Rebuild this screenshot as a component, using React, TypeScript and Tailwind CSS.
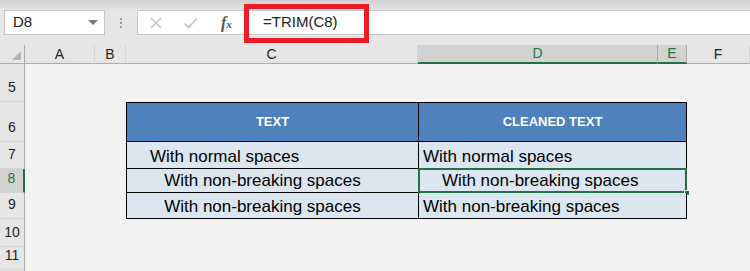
import React from "react";

const cols = [
  { key: "A", w: 70 },
  { key: "B", w: 31 },
  { key: "C", w: 292 },
  { key: "D", w: 240, active: true },
  { key: "E", w: 29, active: true },
  { key: "F", w: 63 },
];

const rows = [
  { n: 5, h: 38 },
  { n: 6, h: 40 },
  { n: 7, h: 27 },
  { n: 8, h: 24, active: true },
  { n: 9, h: 26 },
  { n: 10, h: 28 },
  { n: 11, h: 23 },
  { n: 0, h: 20 },
];

const data: Record<number, [string, string]> = {
  7: ["With normal spaces", "With normal spaces"],
  8: ["\u00a0\u00a0\u00a0With non-breaking spaces", "\u00a0\u00a0\u00a0\u00a0With non-breaking spaces"],
  9: ["\u00a0\u00a0\u00a0With non-breaking spaces", "With non-breaking spaces"],
};

function RowHeader({ n, h, active }: { n: number; h: number; active?: boolean }) {
  return (
    <div
      className={`w-[25px] shrink-0 flex items-end justify-center pb-[3px] border-b border-[#d5d5d5] text-[14px] ${
        active ? "bg-[#d2d2d2] text-[#217346] border-r-2 border-r-[#217346]" : "bg-[#e6e6e6] text-[#222] border-r border-r-[#ababab]"
      }`}
      style={{ height: h }}
    >
      {n > 0 ? n : ""}
    </div>
  );
}

export default function App() {
  return (
    <div className="w-[750px] h-[271px] overflow-hidden bg-[#f2f2f2] font-['Liberation_Sans',Arial,sans-serif]">
      {/* Formula bar */}
      <div className="h-[45px] bg-[#e6e6e6] relative">
        <div className="h-[10px] bg-gradient-to-b from-[#d0d0d0] to-[#e6e6e6]" />
        <div className="flex items-center h-[25px]">
          <div className="ml-[4px] w-[101px] h-[25px] bg-white border border-[#c6c6c6] flex items-center justify-between pl-[8px] pr-[6px] text-[15px] text-[#222]">
            D8
            <span className="w-0 h-0 border-l-[5px] border-r-[5px] border-t-[5px] border-l-transparent border-r-transparent border-t-[#777]" />
          </div>
          <div className="w-[32px] flex flex-col items-center gap-[2px]">
            <span className="w-[2px] h-[2px] bg-[#999]" />
            <span className="w-[2px] h-[2px] bg-[#999]" />
            <span className="w-[2px] h-[2px] bg-[#999]" />
          </div>
          <div className="flex-1 h-[25px] bg-white border border-[#c6c6c6] border-r-0 flex items-center">
            <div className="w-[108px] flex items-center">
              <svg width="14" height="14" viewBox="0 0 14 14" className="ml-[11px]">
                <path d="M2 2L12 12M12 2L2 12" stroke="#c4c4c4" strokeWidth="1.4" />
              </svg>
              <svg width="16" height="14" viewBox="0 0 16 14" className="ml-[20px]">
                <path d="M1.5 7.5L5.5 11.5L14 2.5" stroke="#c4c4c4" strokeWidth="1.6" fill="none" />
              </svg>
              <span className="ml-[22px] text-[16px] italic font-bold font-['Liberation_Serif',serif] text-[#555]">
                f<span className="text-[11px]">x</span>
              </span>
            </div>
            <span className="ml-[17px] text-[15px] text-[#222]">=TRIM(C8)</span>
          </div>
        </div>
        <div className="absolute left-[244px] top-[4px] w-[125px] h-[39px] border-[5px] border-[#ed1c24]" />
      </div>

      {/* Column headers */}
      <div className="flex h-[19px] bg-[#e6e6e6]">
        <div className="w-[25px] shrink-0 border-r border-[#ababab] border-b border-b-[#ababab] relative">
          <svg width="9" height="9" viewBox="0 0 9 9" className="absolute right-[3px] bottom-[3px]">
            <path d="M9 0V9H0Z" fill="#b4b4b4" />
          </svg>
        </div>
        {cols.map((c) => (
          <div
            key={c.key}
            className={`shrink-0 flex items-center justify-center text-[14px] border-r ${
              c.active
                ? "bg-[#d2d2d2] text-[#217346] border-r-[#ababab] border-b-2 border-b-[#217346]"
                : "text-[#222] border-r-[#d5d5d5] border-b border-b-[#ababab]"
            }`}
            style={{ width: c.w }}
          >
            {c.key}
          </div>
        ))}
      </div>

      {/* Sheet */}
      {rows.map((r) => {
        const isHead = r.n === 6;
        const d = data[r.n];
        const inTable = isHead || !!d;
        const cellCls = isHead
          ? "bg-[#4f81bd] justify-center items-center font-bold text-white text-[13px]"
          : "bg-[#dce6f1] text-black text-[17px] leading-[20px] items-end pb-[1px]";
        return (
          <div key={r.n} className="flex" style={{ height: r.h }}>
            <RowHeader n={r.n} h={r.h} active={r.active} />
            <div className="w-[101px] shrink-0" />
            {inTable ? (
              <>
                <div
                  className={`w-[292px] shrink-0 flex border-l border-black border-b ${isHead ? "border-t" : "pl-[23px]"} ${cellCls}`}
                >
                  {isHead ? "TEXT" : <span className="whitespace-pre">{d[0]}</span>}
                </div>
                <div
                  className={`w-[269px] shrink-0 flex border-l border-r border-black border-b relative ${isHead ? "border-t" : "pl-[4px]"} ${cellCls}`}
                >
                  {isHead ? "CLEANED TEXT" : <span className="whitespace-pre">{d[1]}</span>}
                  {r.active && (
                    <>
                      <div className="absolute -left-[1px] -top-[1px] -right-[1px] -bottom-[1px] border-2 border-[#217346]" />
                      <div className="absolute -right-[4px] -bottom-[4px] w-[6px] h-[6px] bg-[#217346] border border-white" />
                    </>
                  )}
                </div>
              </>
            ) : null}
          </div>
        );
      })}
    </div>
  );
}
